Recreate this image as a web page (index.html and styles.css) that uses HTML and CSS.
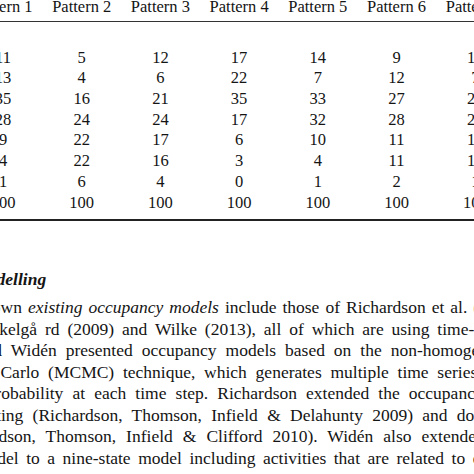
FILE: index.html
```html
<!DOCTYPE html>
<html>
<head>
<meta charset="utf-8">
<link rel="stylesheet" href="styles.css">
</head>
<body>
<div class="page">
  <table class="tbl">
    <thead>
      <tr><th>Pattern 1</th><th>Pattern 2</th><th>Pattern 3</th><th>Pattern 4</th><th>Pattern 5</th><th>Pattern 6</th><th>Pattern 7</th></tr>
    </thead>
    <tbody>
      <tr class="first"><td>11</td><td>5</td><td>12</td><td>17</td><td>14</td><td>9</td><td>13</td></tr>
      <tr><td>13</td><td>4</td><td>6</td><td>22</td><td>7</td><td>12</td><td>7</td></tr>
      <tr><td>35</td><td>16</td><td>21</td><td>35</td><td>33</td><td>27</td><td>24</td></tr>
      <tr><td>28</td><td>24</td><td>24</td><td>17</td><td>32</td><td>28</td><td>26</td></tr>
      <tr><td>9</td><td>22</td><td>17</td><td>6</td><td>10</td><td>11</td><td>16</td></tr>
      <tr><td>4</td><td>22</td><td>16</td><td>3</td><td>4</td><td>11</td><td>13</td></tr>
      <tr><td>1</td><td>6</td><td>4</td><td>0</td><td>1</td><td>2</td><td>1</td></tr>
      <tr class="last"><td>100</td><td>100</td><td>100</td><td>100</td><td>100</td><td>100</td><td>100</td></tr>
    </tbody>
  </table>

  <h2 class="heading">2.2 Modelling</h2>

  <div class="text">
    <span class="line">All known <i>existing occupancy models</i> include those of Richardson et al. (2008)</span>
    <span class="line">&amp; Wäckelgå rd (2009) and Wilke (2013), all of which are using time-homo-</span>
    <span class="line">no, and Widén presented occupancy models based on the non-homogeneous</span>
    <span class="line">Monte Carlo (MCMC) technique, which generates multiple time series from</span>
    <span class="line">of a probability at each time step. Richardson extended the occupancy into</span>
    <span class="line">to lighting (Richardson, Thomson, Infield &amp; Delahunty 2009) and domestic</span>
    <span class="line">(Richardson, Thomson, Infield &amp; Clifford 2010). Widén also extended this</span>
    <span class="line">the model to a nine-state model including activities that are related to energy</span>
  </div>
</div>
</body>
</html>
```

FILE: styles.css
```css
html, body {
  margin: 0;
  padding: 0;
  background: #ffffff;
}

.page {
  width: 474px;
  height: 474px;
  overflow: hidden;
  font-family: "Liberation Serif", "Times New Roman", serif;
  font-size: 16.5px;
  color: #141414;
}

.tbl {
  table-layout: fixed;
  border-collapse: separate;
  border-spacing: 0;
  width: 551px;
  margin-left: -36.35px;
  margin-top: -2.92px;
}

.tbl th,
.tbl td {
  width: 78.7px;
  padding: 0;
  text-align: center;
  font-weight: normal;
  line-height: 20.7px;
  white-space: nowrap;
}

.tbl th {
  padding-bottom: 3.2px;
  border-bottom: 1px solid #333;
}

.tbl .first td {
  padding-top: 25.6px;
}

.tbl .last td {
  padding-bottom: 5.5px;
  border-bottom: 2px solid #222;
}

.heading {
  margin: 48.4px 0 0 -54px;
  font-size: 17.5px;
  line-height: 20px;
  font-weight: bold;
  font-style: italic;
  white-space: nowrap;
}

.text {
  margin: 8px 0 0 -54px;
  width: 574px;
  font-size: 17.5px;
  line-height: 21.5px;
}

.line {
  display: block;
  text-align: justify;
  text-align-last: justify;
}
```
